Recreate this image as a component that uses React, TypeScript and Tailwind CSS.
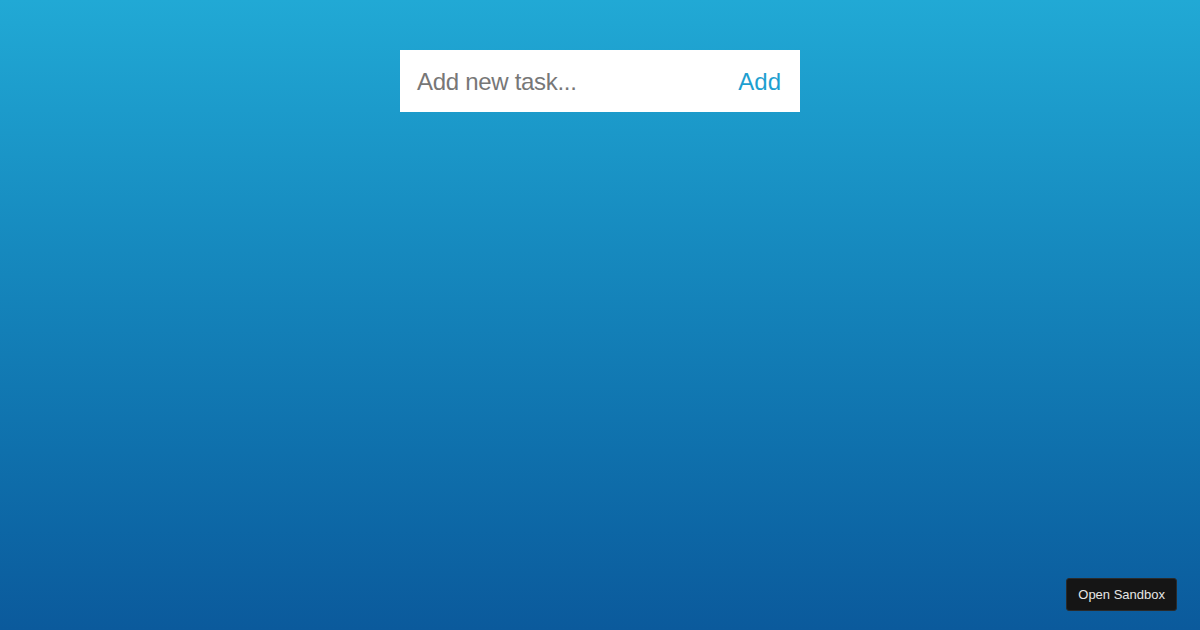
import React from "react";

export default function App() {
  return (
    <div
      className="relative w-[1200px] h-[630px] overflow-hidden bg-gradient-to-b from-[#21a9d5] to-[#0b5a9c]"
      style={{ fontFamily: '"Liberation Sans", Arial, sans-serif' }}
    >
      <div className="flex justify-center pt-[50px]">
        <div className="flex items-center justify-between w-[400px] h-[62px] bg-white pl-[17px] pr-[19px] pt-[2px]">
          <span className="text-[24px] tracking-[-0.3px] text-[#777777]">Add new task...</span>
          <span className="text-[24px] text-[#1e9fd0]">Add</span>
        </div>
      </div>
      <div className="absolute right-[23px] bottom-[19px] h-[33px] px-[11px] flex items-center rounded-[3px] bg-[#151515] border border-[#2a2a2a] text-[13px] text-[#e6e6e6]">
        Open Sandbox
      </div>
    </div>
  );
}
